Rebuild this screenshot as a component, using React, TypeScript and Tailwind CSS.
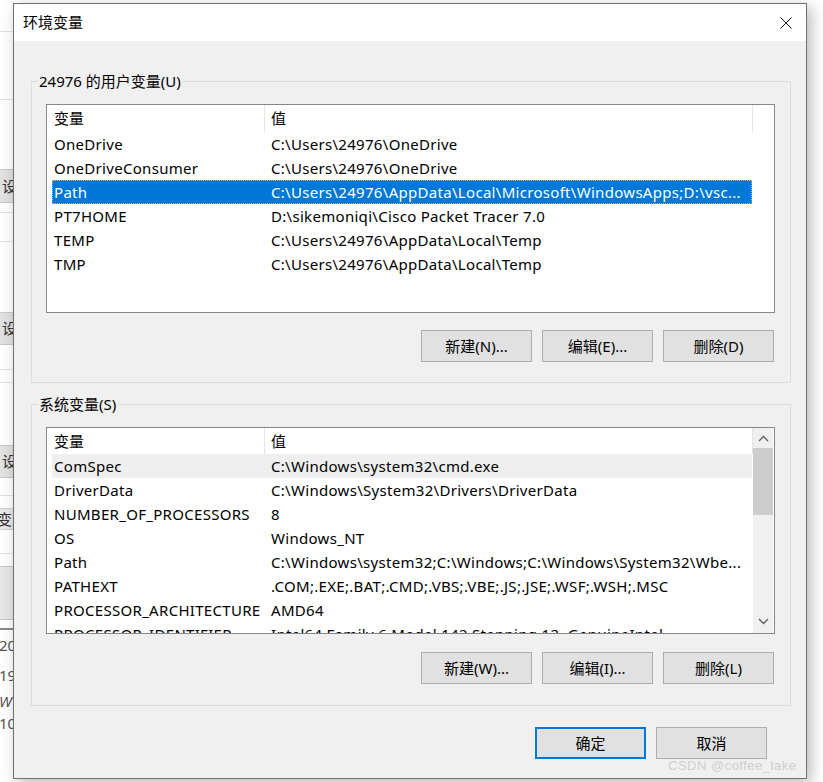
import clsx from 'clsx';

const userVars = [
  { name: 'OneDrive', value: 'C:\\Users\\24976\\OneDrive' },
  { name: 'OneDriveConsumer', value: 'C:\\Users\\24976\\OneDrive' },
  { name: 'Path', value: 'C:\\Users\\24976\\AppData\\Local\\Microsoft\\WindowsApps;D:\\vsc...', selected: true },
  { name: 'PT7HOME', value: 'D:\\sikemoniqi\\Cisco Packet Tracer 7.0' },
  { name: 'TEMP', value: 'C:\\Users\\24976\\AppData\\Local\\Temp' },
  { name: 'TMP', value: 'C:\\Users\\24976\\AppData\\Local\\Temp' },
];

const sysVars = [
  { name: 'ComSpec', value: 'C:\\Windows\\system32\\cmd.exe', hover: true },
  { name: 'DriverData', value: 'C:\\Windows\\System32\\Drivers\\DriverData' },
  { name: 'NUMBER_OF_PROCESSORS', value: '8' },
  { name: 'OS', value: 'Windows_NT' },
  { name: 'Path', value: 'C:\\Windows\\system32;C:\\Windows;C:\\Windows\\System32\\Wbe...' },
  { name: 'PATHEXT', value: '.COM;.EXE;.BAT;.CMD;.VBS;.VBE;.JS;.JSE;.WSF;.WSH;.MSC' },
  { name: 'PROCESSOR_ARCHITECTURE', value: 'AMD64' },
  { name: 'PROCESSOR_IDENTIFIER', value: 'Intel64 Family 6 Model 142 Stepping 12, GenuineIntel' },
];

type Var = { name: string; value: string; selected?: boolean; hover?: boolean };

function Row({ v }: { v: Var }) {
  return (
    <div
      className={clsx(
        'ml-[5px] w-[700px] h-[24px] shrink-0 flex items-center tracking-[0.3px]',
        v.selected && 'bg-[#0078d7] text-white outline-1 outline-dotted outline-[#f2a65a] -outline-offset-1',
        v.hover && 'bg-[#efefef]'
      )}
    >
      <div className="w-[212px] pl-[2px] whitespace-nowrap overflow-hidden">{v.name}</div>
      <div className="w-[488px] pl-[7px] whitespace-nowrap overflow-hidden">{v.value}</div>
    </div>
  );
}

function Header({ h }: { h: string }) {
  return (
    <div className={clsx('flex shrink-0 bg-white', h)}>
      <div className="w-[218px] pl-[7px] flex items-center border-r border-[#e5e5e5]">变量</div>
      <div className="w-[488px] pl-[6px] flex items-center border-r border-[#e5e5e5]">值</div>
    </div>
  );
}

function Btn({ children, primary }: { children: React.ReactNode; primary?: boolean }) {
  return (
    <button
      className={clsx(
        'w-[111px] h-[32px] bg-[#e1e1e1] flex items-center justify-center text-[15px] text-black',
        primary ? 'border-2 border-[#0078d7]' : 'border border-[#adadad]'
      )}
    >
      {children}
    </button>
  );
}

function Chevron({ up }: { up?: boolean }) {
  return (
    <svg width="11" height="7" viewBox="0 0 11 7" className="mx-auto">
      <path
        d={up ? 'M1 6 L5.5 1.5 L10 6' : 'M1 1 L5.5 5.5 L10 1'}
        fill="none"
        stroke="#606060"
        strokeWidth="1.4"
      />
    </svg>
  );
}

// bits of the window behind the dialog
function LeftStrip() {
  return (
    <div className="w-[13px] shrink-0 flex flex-col bg-white text-[15px] text-[#333] overflow-hidden leading-none">
      <div className="h-[32px] border-b border-[#e3e3e3]" />
      <div className="h-[68px] border-b border-[#e3e3e3]" />
      <div className="h-[69px]" />
      <div className="h-[34px] bg-[#e1e1e1] border-y border-[#c8c8c8] flex items-center pl-[2px]">设</div>
      <div className="h-[10px] border-b border-[#e3e3e3]" />
      <div className="h-[29px] border-b border-[#e3e3e3]" />
      <div className="h-[70px]" />
      <div className="h-[33px] bg-[#e1e1e1] border-y border-[#c8c8c8] flex items-center pl-[2px]">设</div>
      <div className="h-[25px] border-b border-[#e3e3e3]" />
      <div className="h-[13px] border-b border-[#e3e3e3]" />
      <div className="h-[62px]" />
      <div className="h-[33px] bg-[#e1e1e1] border-y border-[#c8c8c8] flex items-center pl-[2px]">设</div>
      <div className="h-[18px] border-b border-[#e3e3e3]" />
      <div className="h-[12px]" />
      <div className="h-[22px] bg-[#e9e9e9] border-y border-[#d0d0d0] flex items-center whitespace-nowrap -ml-[3px]">变量</div>
      <div className="h-[24px] border-b border-[#e3e3e3]" />
      <div className="h-[12px]" />
      <div className="h-[54px] bg-[#e6e6e6] border-y border-[#c8c8c8]" />
      <div className="h-[10px] border-b-2 border-[#8a8a8a]" />
      <div className="flex flex-col text-[#555] text-[15px] -ml-[1px] whitespace-nowrap">
        <span className="leading-[30px]">20</span>
        <span className="leading-[30px]">19</span>
        <span className="leading-[22px] italic">W</span>
        <span className="leading-[22px]">10</span>
      </div>
    </div>
  );
}

export default function App() {
  return (
    <div className="relative w-[823px] h-[782px] bg-white overflow-hidden flex font-['Segoe_UI','Noto_Sans','Noto_Sans_CJK_SC',sans-serif] text-[15px] text-black">
      <LeftStrip />

      <div className="mt-[3px] w-[794px] h-[776px] shrink-0 border border-[#707070] bg-[#f0f0f0] flex flex-col shadow-[4px_4px_14px_rgba(0,0,0,0.28)]">
        <div className="h-[37px] bg-white flex items-center justify-between pl-[9px] pr-[14px]">
          <span className="text-[15px]">环境变量</span>
          <svg width="12" height="12" viewBox="0 0 12 12">
            <path d="M0.5 0.5 L11.5 11.5 M11.5 0.5 L0.5 11.5" stroke="#111" strokeWidth="1" />
          </svg>
        </div>

        <div className="relative mt-[40px] ml-[17px] w-[760px] h-[302px] border border-[#dcdcdc]">
          <span className="absolute left-[6px] -top-[11px] px-px bg-[#f0f0f0] leading-[20px]">24976 的用户变量(U)</span>
          <div className="mt-[22px] ml-[14px] w-[729px] h-[209px] border border-[#828790] bg-white flex flex-col overflow-hidden">
            <Header h="h-[27px]" />
            {userVars.map((v) => (
              <Row key={v.name} v={v} />
            ))}
          </div>
          <div className="mt-[17px] ml-[13px] w-[729px] flex justify-end gap-[10px]">
            <Btn>新建(N)...</Btn>
            <Btn>编辑(E)...</Btn>
            <Btn>删除(D)</Btn>
          </div>
        </div>

        <div className="relative mt-[21px] ml-[17px] w-[760px] h-[302px] border border-[#dcdcdc]">
          <span className="absolute left-[6px] -top-[11px] px-px bg-[#f0f0f0] leading-[20px]">系统变量(S)</span>
          <div className="mt-[22px] ml-[14px] w-[729px] h-[207px] border border-[#828790] bg-white flex overflow-hidden">
            <div className="w-[706px] flex flex-col overflow-hidden">
              <Header h="h-[26px]" />
              {sysVars.map((v) => (
                <Row key={v.name} v={v} />
              ))}
            </div>
            <div className="w-[20px] bg-[#f0f0f0] flex flex-col">
              <div className="h-[20px] flex items-center">
                <Chevron up />
              </div>
              <div className="h-[67px] bg-[#cdcdcd]" />
              <div className="flex-1" />
              <div className="h-[24px] flex items-center">
                <Chevron />
              </div>
            </div>
          </div>
          <div className="mt-[18px] ml-[13px] w-[729px] flex justify-end gap-[10px]">
            <Btn>新建(W)...</Btn>
            <Btn>编辑(I)...</Btn>
            <Btn>删除(L)</Btn>
          </div>
        </div>

        <div className="mt-[21px] pr-[39px] flex justify-end gap-[10px]">
          <Btn primary>确定</Btn>
          <Btn>取消</Btn>
        </div>
      </div>

      <span className="absolute left-[668px] top-[756px] text-[13px] text-[#cfcfcf] font-['Liberation_Sans',sans-serif] tracking-[0.5px]">
        CSDN @coffee_lake
      </span>
    </div>
  );
}
